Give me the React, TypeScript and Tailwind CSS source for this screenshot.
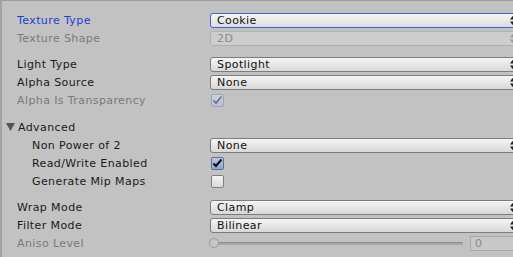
import { ReactNode } from "react"

const font = { fontFamily: '"DejaVu Sans", Verdana, sans-serif' }

type RowProps = {
  label: string;
  indent?: boolean;
  tone?: "normal" | "focus" | "disabled";
  children: ReactNode;
}

const Row = ({ label, indent, tone = "normal", children }: RowProps) => {
  const color =
    tone === "focus" ? "text-[#1d3fd8]" : tone === "disabled" ? "text-[#7a7a7a]" : "text-[#1a1a1a]"
  return (
    <div className="flex h-[18px] items-center">
      <div className={`w-[193px] shrink-0 text-[11px] leading-none tracking-[0.4px] ${indent ? "pl-[15px]" : ""} ${color}`}>
        {label}
      </div>
      <div className="flex flex-1 items-center">{children}</div>
    </div>
  )
}

const Arrows = ({ faded }: { faded?: boolean }) => (
  <svg width="5" height="9" viewBox="0 0 5 9" className="mr-[6px]">
    <path d="M2.5 0 L5 3.5 L0 3.5 Z M2.5 9 L5 5.5 L0 5.5 Z" fill={faded ? "#9a9a9a" : "#222"} />
  </svg>
)

const Dropdown = ({ value, focus, disabled }: { value: string; focus?: boolean; disabled?: boolean }) => {
  const box = disabled
    ? "border-[#b0b0b0] bg-[#cdcdcd] text-[#8a8a8a]"
    : focus
      ? "border-[#3f64d8] bg-gradient-to-b from-[#f7f7f7] to-[#dcdcdc] text-[#111]"
      : "border-[#7d7d7d] bg-gradient-to-b from-[#f5f5f5] to-[#d8d8d8] text-[#111]"
  return (
    <div className={`flex h-[15px] flex-1 items-center justify-between rounded-[3px] border pl-[6px] text-[11px] leading-none tracking-[0.4px] ${box}`}>
      <span>{value}</span>
      <Arrows faded={disabled} />
    </div>
  )
}

const Checkbox = ({ checked, disabled, active }: { checked?: boolean; disabled?: boolean; active?: boolean }) => {
  const box = active
    ? "border-[#5f6f92] bg-gradient-to-b from-[#b7c8ea] to-[#8fa6d6]"
    : disabled
      ? "border-[#9ea4b2] bg-gradient-to-b from-[#ccd3e2] to-[#b6bfd3]"
      : "border-[#7f7f7f] bg-gradient-to-b from-[#f4f4f4] to-[#d9d9d9]"
  return (
    <div className={`ml-[1px] flex h-[13px] w-[13px] items-center justify-center rounded-[2px] border ${box}`}>
      {checked && (
        <svg width="11" height="10" viewBox="0 0 11 10">
          <path
            d="M1.5 5.5 L4 8 L9.5 1.5"
            fill="none"
            stroke={disabled ? "#6b7080" : "#000"}
            strokeWidth={disabled ? 1.6 : 2}
          />
        </svg>
      )}
    </div>
  )
}

const Slider = () => (
  <div className="flex flex-1 items-center">
    <div className="relative flex h-[12px] w-[255px] items-center">
      <div className="ml-[2px] h-[3px] w-[251px] rounded-full bg-[#a6a6a6] shadow-[inset_0_1px_0_#8f8f8f]" />
      <div className="absolute left-[-1px] top-[1px] h-[10px] w-[10px] rounded-full border border-[#9a9a9a] bg-[#c6c6c6]" />
    </div>
    <div className="ml-[5px] flex h-[15px] flex-1 items-center border border-[#a8a8a8] bg-[#c8c8c8] pl-[4px] text-[11px] leading-none text-[#8a8a8a]">
      0
    </div>
  </div>
)

const App = () => {
  return (
    <div className="h-[257px] w-[513px] overflow-hidden border-t border-l-2 border-t-[#9c9c9c] border-l-[#a3a3a3] bg-[#c2c2c2]" style={font}>
      <div className="w-[520px] pl-[15px] pt-[10px]">
        <Row label="Texture Type" tone="focus">
          <Dropdown value="Cookie" focus />
        </Row>
        <Row label="Texture Shape" tone="disabled">
          <Dropdown value="2D" disabled />
        </Row>

        <div className="h-[8px]" />
        <Row label="Light Type">
          <Dropdown value="Spotlight" />
        </Row>
        <Row label="Alpha Source">
          <Dropdown value="None" />
        </Row>
        <Row label="Alpha Is Transparency" tone="disabled">
          <Checkbox checked disabled />
        </Row>

        <div className="h-[9px]" />
        <div className="-ml-[11px] flex h-[18px] items-center gap-[3px] text-[11px] leading-none tracking-[0.4px] text-[#1a1a1a]">
          <svg width="9" height="8" viewBox="0 0 9 8">
            <path d="M0 0 L9 0 L4.5 8 Z" fill="#555" />
          </svg>
          <span>Advanced</span>
        </div>
        <Row label="Non Power of 2" indent>
          <Dropdown value="None" />
        </Row>
        <Row label="Read/Write Enabled" indent>
          <Checkbox checked active />
        </Row>
        <Row label="Generate Mip Maps" indent>
          <Checkbox />
        </Row>

        <div className="h-[8px]" />
        <Row label="Wrap Mode">
          <Dropdown value="Clamp" />
        </Row>
        <Row label="Filter Mode">
          <Dropdown value="Bilinear" />
        </Row>
        <Row label="Aniso Level" tone="disabled">
          <Slider />
        </Row>
      </div>
    </div>
  )
}

export default App
